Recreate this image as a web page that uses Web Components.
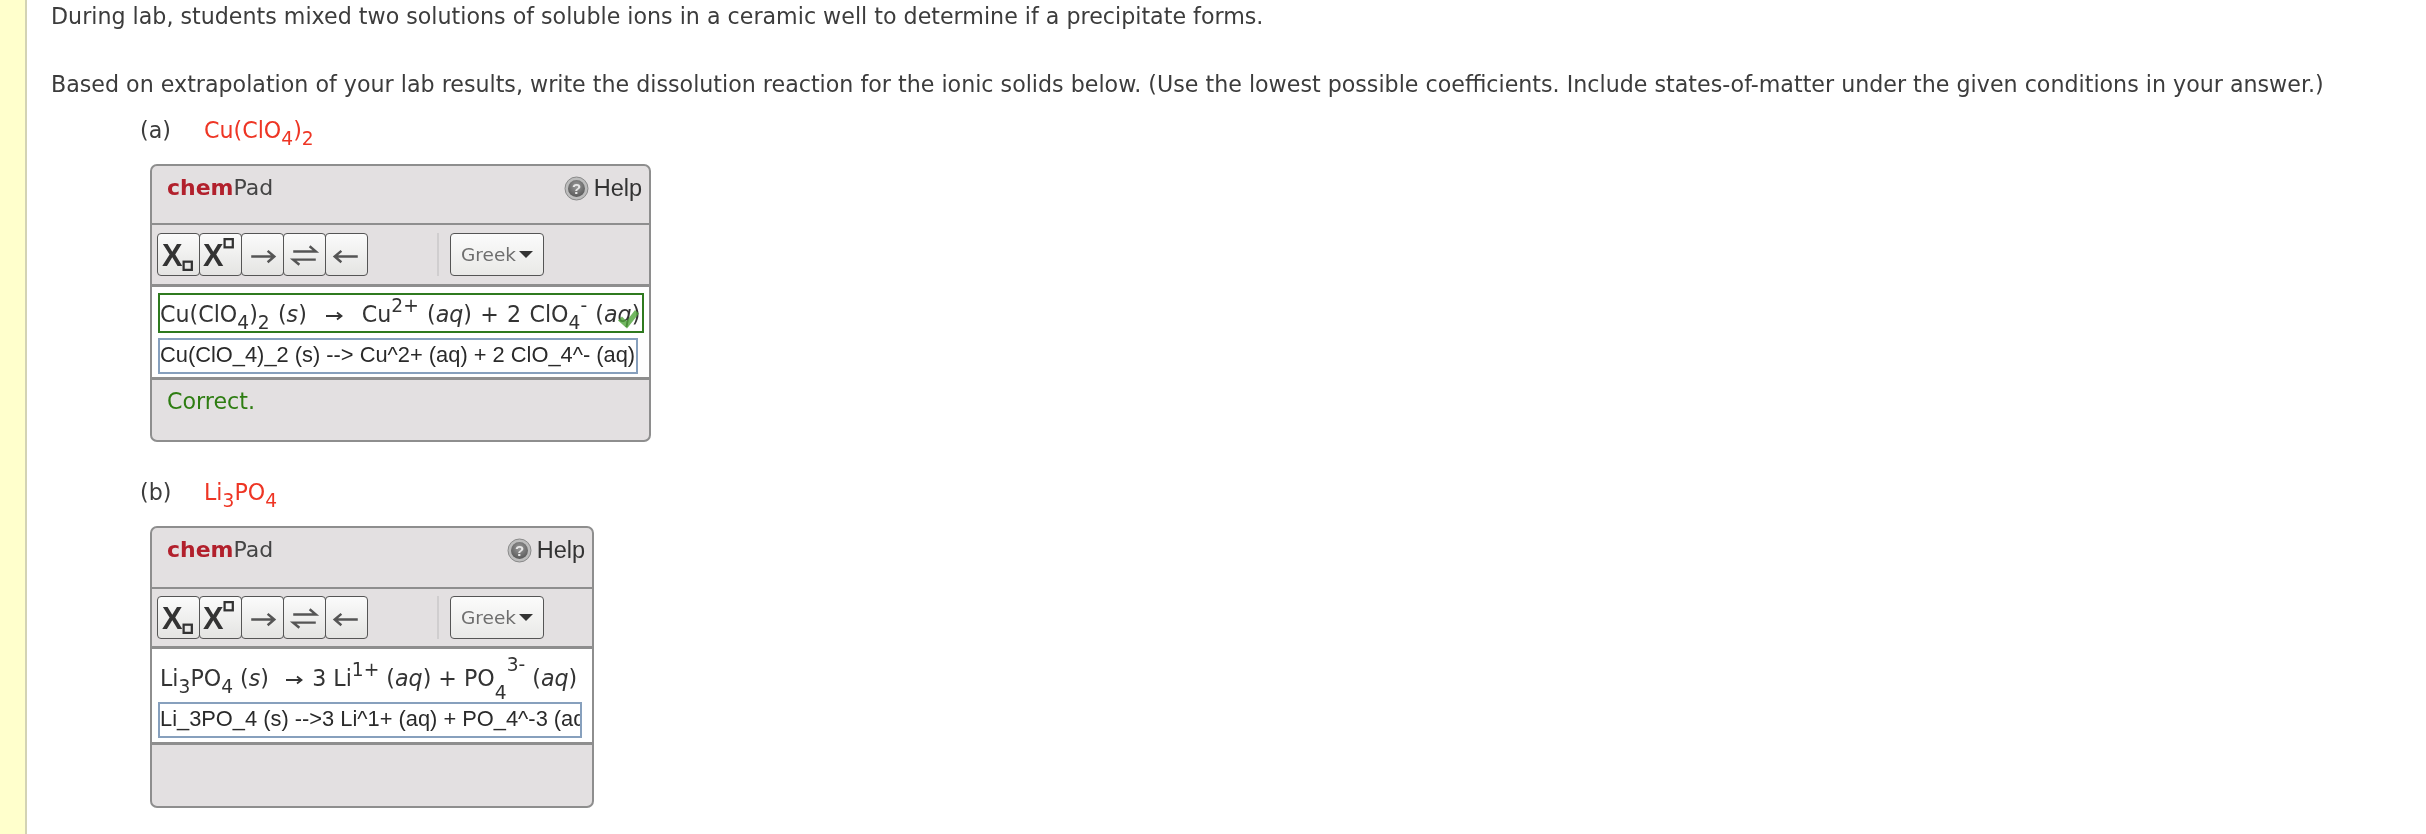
<!DOCTYPE html>
<html>
<head>
<meta charset="utf-8">
<title>chemPad</title>
<style>
  html,body{margin:0;padding:0;background:#fff;}
  body{font-family:"DejaVu Sans",Verdana,sans-serif;color:#333;}
</style>
</head>
<body>

<lab-page>
  <lab-line top="0">During lab, students mixed two solutions of soluble ions in a ceramic well to determine if a precipitate forms.</lab-line>
  <lab-line top="36">Based on extrapolation of your lab results, write the dissolution reaction for the ionic solids below. (Use the lowest possible coefficients. Include states-of-matter under the given conditions in your answer.)</lab-line>

  <question-part label="(a)">
    <span slot="formula">Cu(ClO<chem-sub>4</chem-sub>)<chem-sub>2</chem-sub></span>
    <chem-pad status="correct" style="--pad-width:501px;--head-h:59px;--tools-h:62px;--tools-top:8px;--answer-h:93px;--foot-h:60px;--input-w:480px;--math-top:6px;--math-space:1.2px">
      <span slot="math">Cu(ClO<chem-sub>4</chem-sub>)<chem-sub>2</chem-sub> (<i>s</i>)  <chem-arrow></chem-arrow>  Cu<chem-sup>2+</chem-sup> (<i>aq</i>) + 2 ClO<chem-sub>4</chem-sub><chem-sup>-</chem-sup> (<i>aq</i>)</span>
      <span slot="input">Cu(ClO_4)_2 (s) --&gt; Cu^2+ (aq) + 2 ClO_4^- (aq)</span>
      <span slot="feedback">Correct.</span>
    </chem-pad>
  </question-part>

  <question-part label="(b)" style="--part-top:20px">
    <span slot="formula">Li<chem-sub>3</chem-sub>PO<chem-sub>4</chem-sub></span>
    <chem-pad style="--pad-width:444px;--head-h:61px;--tools-h:60px;--tools-top:7px;--answer-h:96px;--foot-h:61px;--input-w:424px;--math-top:8px;--math-space:0px">
      <span slot="math">Li<chem-sub>3</chem-sub>PO<chem-sub>4</chem-sub> (<i>s</i>)  <chem-arrow></chem-arrow> 3 Li<chem-sup>1+</chem-sup> (<i>aq</i>) + PO<chem-sub low>4</chem-sub><chem-sup high>3-</chem-sup> (<i>aq</i>)</span>
      <span slot="input">Li_3PO_4 (s) --&gt;3 Li^1+ (aq) + PO_4^-3 (aq)</span>
    </chem-pad>
  </question-part>
</lab-page>

<script>
// pagina con la franja amarilla a la izquierda
class LabPage extends HTMLElement{
  constructor(){
    super();
    this.attachShadow({mode:"open"});
    this.shadowRoot.innerHTML = `
      <style>
        :host{display:flex;min-height:834px;box-sizing:border-box;overflow:hidden;filter:blur(.45px);}
        .strip{flex:0 0 27px;background:#ffffcc;border-right:2px solid #d3d3b4;box-sizing:border-box;}
        .content{flex:1;padding-left:24px;min-width:0;}
      </style>
      <div class="strip"></div>
      <div class="content"><slot></slot></div>
    `;
  }
}

class LabLine extends HTMLElement{
  constructor(){
    super();
    this.attachShadow({mode:"open"});
    this.shadowRoot.innerHTML = `
      <style>
        :host{display:block;font:22.18px/32px "DejaVu Sans",Verdana,sans-serif;color:#3c3c3c;white-space:nowrap;}
      </style>
      <slot></slot>
    `;
  }
  connectedCallback(){
    this.style.marginTop = (this.getAttribute('top') || 0) + 'px';
  }
}

class QuestionPart extends HTMLElement{
  constructor(){
    super();
    this.attachShadow({mode:"open"});
    this.shadowRoot.innerHTML = `
      <style>
        :host{display:block;padding-left:89px;margin-top:var(--part-top,0px);}
        .head{display:flex;align-items:baseline;height:51px;padding-top:14px;box-sizing:border-box;font:22.18px/32px "DejaVu Sans",Verdana,sans-serif;color:#3c3c3c;}
        .label{width:64px;}
        .formula{color:#ee3524;}
        .pad{margin:13px 0 0 10px;}
      </style>
      <div class="head"><span class="label"></span><span class="formula"><slot name="formula"></slot></span></div>
      <div class="pad"><slot></slot></div>
    `;
  }
  connectedCallback(){
    this.shadowRoot.querySelector('.label').textContent = this.getAttribute('label');
  }
}

// sin espacios en el shadow: el texto del padre va con white-space:pre
class ChemSub extends HTMLElement{
  constructor(){
    super();
    this.attachShadow({mode:"open"});
    this.shadowRoot.innerHTML = `<style>:host{display:inline;font-size:.84em;vertical-align:-.36em;line-height:0;}:host([low]){vertical-align:-.68em;}</style><slot></slot>`;
  }
}

class ChemSup extends HTMLElement{
  constructor(){
    super();
    this.attachShadow({mode:"open"});
    this.shadowRoot.innerHTML = `<style>:host{display:inline;font-size:.84em;vertical-align:.55em;line-height:0;}:host([high]){vertical-align:.82em;}</style><slot></slot>`;
  }
}

class ChemArrow extends HTMLElement{
  constructor(){
    super();
    this.attachShadow({mode:"open"});
    this.shadowRoot.innerHTML = `<style>:host{display:inline-block;width:18px;height:12px;margin:0 2px;}svg{display:block;}</style><svg width="18" height="12" viewBox="0 0 18 12"><path d="M1 6H16M12 2.5L16.5 6L12 9.5" fill="none" stroke="#333" stroke-width="1.8"/></svg>`;
  }
}

// boton de la barra: kind = sub | sup | right | both | left
class ToolButton extends HTMLElement{
  constructor(){
    super();
    this.attachShadow({mode:"open"});
    this.shadowRoot.innerHTML = `
      <style>
        :host{display:block;width:43px;height:43px;margin-right:-1px;box-sizing:border-box;
          border:1.5px solid #555;border-radius:4px;background:linear-gradient(#fbfbfb,#e4e4e2);}
        svg{display:block;width:100%;height:100%;}
        text{font:bold 30px "Liberation Sans",Arial,sans-serif;fill:#333;}
      </style>
      <svg viewBox="0 0 40 40"></svg>
    `;
  }
  connectedCallback(){
    const icons = {
      sub:`<text x="4" y="31">X</text><rect x="25" y="27" width="8" height="8" fill="none" stroke="#333" stroke-width="2.2"/>`,
      sup:`<text x="3" y="31">X</text><rect x="24" y="5" width="8" height="8" fill="none" stroke="#333" stroke-width="2.2"/>`,
      right:`<path d="M9 22H31M25 16.5L31.5 22L25 27.5" fill="none" stroke="#555" stroke-width="2.4"/>`,
      both:`<path d="M9 17H31L25 12M31 25H9L15 30" fill="none" stroke="#555" stroke-width="2.4"/>`,
      left:`<path d="M31 22H9M15 16.5L8.5 22L15 27.5" fill="none" stroke="#555" stroke-width="2.4"/>`
    };
    this.shadowRoot.querySelector('svg').innerHTML = icons[this.getAttribute('kind')];
  }
}

class GreekButton extends HTMLElement{
  constructor(){
    super();
    this.attachShadow({mode:"open"});
    this.shadowRoot.innerHTML = `
      <style>
        :host{display:flex;align-items:center;justify-content:center;gap:3px;width:94px;height:43px;box-sizing:border-box;
          border:1.5px solid #555;border-radius:4px;background:linear-gradient(#fbfbfb,#e9e9e7);
          font:18.5px "DejaVu Sans",sans-serif;color:#6e6e6e;}
        .caret{width:0;height:0;border:7px solid transparent;border-top:7px solid #333;border-bottom:0;}
      </style>
      <span>Greek</span><span class="caret"></span>
    `;
  }
}

class HelpLink extends HTMLElement{
  constructor(){
    super();
    this.attachShadow({mode:"open"});
    this.shadowRoot.innerHTML = `
      <style>
        :host{display:flex;align-items:center;gap:5px;height:28px;font:23.5px/28px "Liberation Sans",Arial,sans-serif;color:#333;}
        svg{display:block;}
      </style>
      <svg width="25" height="25" viewBox="0 0 25 25">
        <defs><radialGradient id="g" cx=".5" cy=".35" r=".7"><stop offset="0" stop-color="#9a9a9a"/><stop offset="1" stop-color="#555"/></radialGradient></defs>
        <circle cx="12.5" cy="12.5" r="11.5" fill="#bdbdbd" stroke="#8a8a8a"/>
        <circle cx="12.5" cy="12.5" r="8.5" fill="url(#g)"/>
        <text x="12.5" y="18" text-anchor="middle" font-family="Liberation Sans" font-weight="bold" font-size="15" fill="#e8e8e8">?</text>
      </svg>
      <span>Help</span>
    `;
  }
}

class ChemPad extends HTMLElement{
  constructor(){
    super();
    this.attachShadow({mode:"open"});
    this.shadowRoot.innerHTML = `
      <style>
        :host{display:block;width:var(--pad-width,501px);box-sizing:border-box;
          border:2px solid #8e8e8e;border-radius:7px;background:#e3e0e1;color:#333;}
        .head{display:flex;justify-content:space-between;align-items:flex-start;height:var(--head-h);box-sizing:border-box;padding:8px 7px 0 15px;border-bottom:2px solid #8e8e8e;}
        .title{font:22px/28px "DejaVu Sans",Verdana,sans-serif;color:#444;}
        .title b{color:#b2202c;}
        .tools{display:flex;height:var(--tools-h);box-sizing:border-box;padding:var(--tools-top) 0 0 5px;border-bottom:3px solid #8e8e8e;}
        .sep{width:2px;height:43px;background:#d0cecf;margin:0 11px 0 70px;}
        .answer{background:#fff;height:var(--answer-h);box-sizing:border-box;padding:var(--math-top) 5px 0 6px;border-bottom:3px solid #8e8e8e;}
        .math{height:40px;box-sizing:border-box;position:relative;white-space:pre;word-spacing:var(--math-space,0);font:22.18px/39px "DejaVu Sans",Verdana,sans-serif;border:2px solid transparent;}
        :host([status="correct"]) .math{border-color:#2f7a1f;}
        .check{display:none;position:absolute;right:3px;top:15px;}
        :host([status="correct"]) .check{display:block;}
        .input{height:36px;width:var(--input-w);box-sizing:border-box;margin-top:5px;white-space:pre;overflow:hidden;border:2px solid #87a0bd;background:#fff;
          font:21.85px/30px "Liberation Sans",Arial,sans-serif;color:#2a2a2a;}
        .feedback{height:var(--foot-h);box-sizing:border-box;padding:7px 15px;font:22.18px/28px "DejaVu Sans",Verdana,sans-serif;color:#2e7d12;}
      </style>
      <div class="head"><span class="title"><b>chem</b>Pad</span><help-link></help-link></div>
      <div class="tools">
        <tool-button kind="sub"></tool-button>
        <tool-button kind="sup"></tool-button>
        <tool-button kind="right"></tool-button>
        <tool-button kind="both"></tool-button>
        <tool-button kind="left"></tool-button>
        <span class="sep"></span>
        <greek-button></greek-button>
      </div>
      <div class="answer">
        <div class="math"><slot name="math"></slot><svg class="check" width="21" height="19" viewBox="0 0 21 19"><path d="M0 10.5L4 6.5L8.5 11L17 0L21 3.5L9 18.5Z" fill="#4fa53a" opacity=".8"/></svg></div>
        <div class="input"><slot name="input"></slot></div>
      </div>
      <div class="feedback"><slot name="feedback"></slot></div>
    `;
  }
}

customElements.define('lab-page', LabPage);
customElements.define('lab-line', LabLine);
customElements.define('question-part', QuestionPart);
customElements.define('chem-sub', ChemSub);
customElements.define('chem-sup', ChemSup);
customElements.define('chem-arrow', ChemArrow);
customElements.define('tool-button', ToolButton);
customElements.define('greek-button', GreekButton);
customElements.define('help-link', HelpLink);
customElements.define('chem-pad', ChemPad);
</script>
</body>
</html>
